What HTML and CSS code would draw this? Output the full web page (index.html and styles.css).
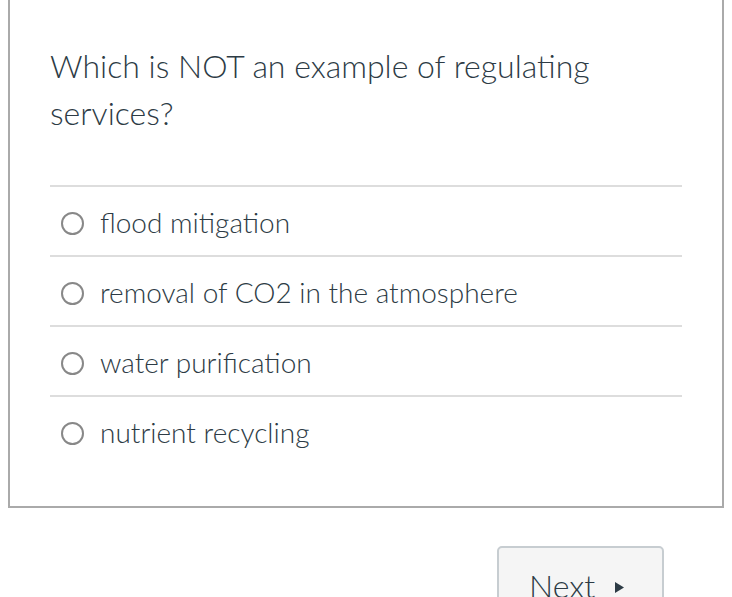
FILE: index.html
```html
<!DOCTYPE html>
<html>
<head>
<meta charset="utf-8">
<link rel="stylesheet" href="styles.css">
</head>
<body>
<div class="quiz-box">
  <div class="question">Which is NOT an example of regulating services?</div>
  <div class="answers">
    <label class="answer"><span class="radio"></span><span class="answer-text">flood mitigation</span></label>
    <label class="answer"><span class="radio"></span><span class="answer-text">removal of CO2 in the atmosphere</span></label>
    <label class="answer"><span class="radio"></span><span class="answer-text">water purification</span></label>
    <label class="answer"><span class="radio"></span><span class="answer-text">nutrient recycling</span></label>
  </div>
</div>
<div class="nav">
  <button class="next-btn"><span>Next</span><svg class="arrow" width="9" height="11" viewBox="0 0 9 11"><path d="M0 0 L9 5.5 L0 11 Z" fill="#2d3b45"/></svg></button>
</div>
</body>
</html>
```
FILE: styles.css
```css
html, body {
  margin: 0;
  padding: 0;
  background: #ffffff;
}
body {
  margin: 0 8px;
  font-family: Lato, "Open Sans", sans-serif;
  color: #2d3b45;
  overflow: hidden;
}
.quiz-box {
  border: 2px solid #aaaaaa;
  border-top: 0;
  padding: 42px 40px 41px;
}
.question {
  font-size: 32px;
  font-weight: 300;
  line-height: 47px;
  width: 600px;
  margin-bottom: 49px;
}
.answers {
  display: flex;
  flex-direction: column;
}
.answer {
  display: flex;
  align-items: center;
  height: 68px;
  border-top: 2px solid #dddddd;
  padding-left: 11px;
  gap: 16px;
}
.radio {
  width: 19px;
  height: 19px;
  border: 2.5px solid #888888;
  border-radius: 50%;
  flex: none;
  margin-top: 4px;
}
.answer-text {
  font-size: 28px;
  font-weight: 300;
  margin-top: 2px;
}
.nav {
  display: flex;
  justify-content: flex-end;
  padding: 38px 60px 0 0;
}
.next-btn {
  width: 167px;
  height: 62px;
  background: #f5f5f5;
  border: 2px solid #c7cdd1;
  border-radius: 5px;
  font-family: Lato, "Open Sans", sans-serif;
  font-weight: 300;
  font-size: 32px;
  line-height: 38px;
  color: #2d3b45;
  padding: 19px 0 0 30px;
  display: flex;
  justify-content: flex-start;
  align-items: flex-start;
  gap: 20px;
}
.arrow {
  flex: none;
  margin-top: 15px;
}
```
